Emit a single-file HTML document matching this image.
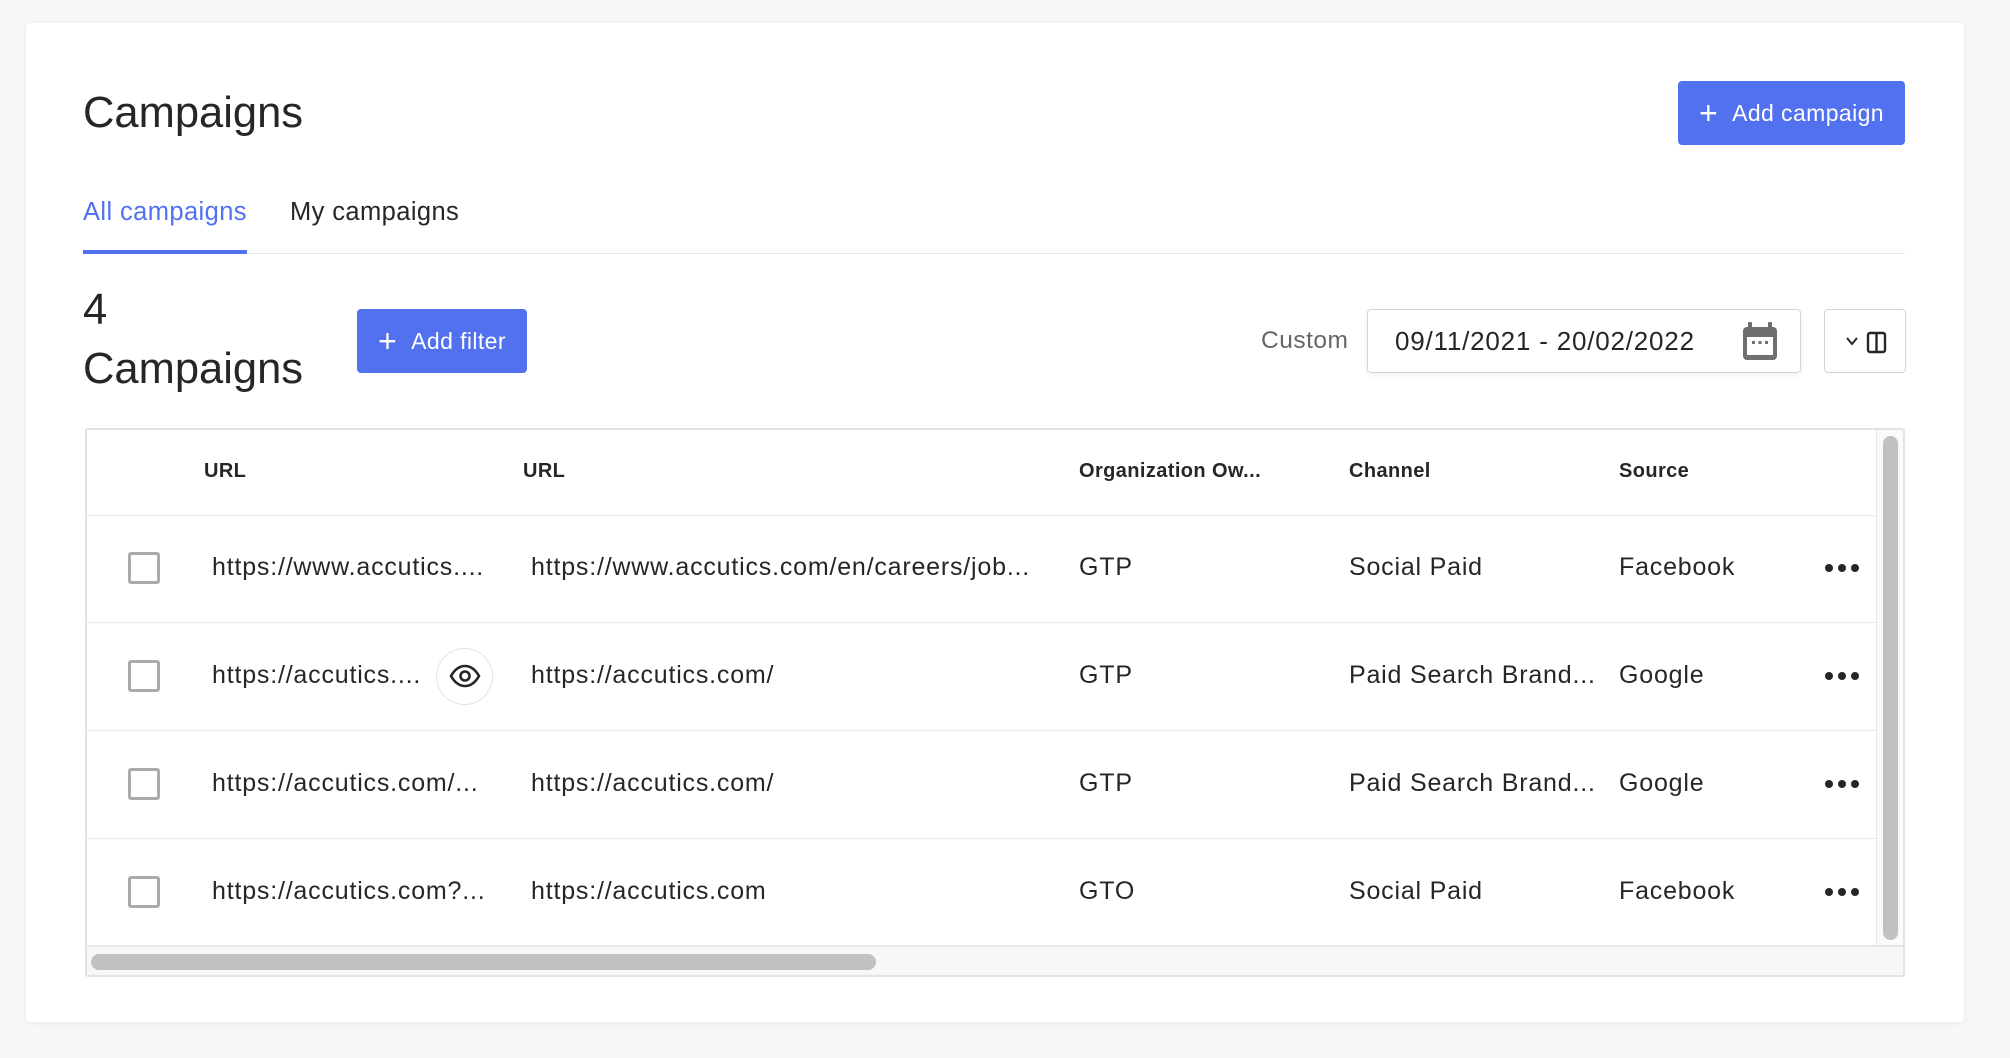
<!DOCTYPE html>
<html><head><meta charset="utf-8"><style>
*{box-sizing:border-box;margin:0;padding:0}
body{width:2010px;height:1058px;background:#f7f7f7;font-family:"Liberation Sans",sans-serif;color:#262626;position:relative;overflow:hidden}
.a{position:absolute;white-space:nowrap}
.card{position:absolute;left:26px;top:23px;width:1938px;height:999px;background:#fff;border-radius:4px;box-shadow:0 1px 6px rgba(0,0,0,.06)}
.btn{position:absolute;background:#5271ef;color:#fff;border-radius:4px;font-size:23px;letter-spacing:.4px;display:flex;align-items:center;justify-content:center;gap:14px}
.t{font-size:25px;line-height:30px;letter-spacing:.8px}
.h{font-size:20px;font-weight:bold;line-height:24px;letter-spacing:.4px}
.cb{position:absolute;left:128px;width:32px;height:32px;border:3px solid #aaa;border-radius:3px}
.sep{position:absolute;left:86px;width:1790px;height:1px;background:#ebebeb}
.dots{position:absolute;left:1825px;display:flex;gap:5px}
.dots i{width:8px;height:8px;border-radius:50%;background:#262626;display:block}
</style></head><body>
<div class="card"></div>
<div class="a" style="left:83px;top:88px;font-size:43.5px;line-height:50px">Campaigns</div>
<div class="btn" style="left:1678px;top:81px;width:227px;height:64px"><span style="font-size:32px;font-weight:300;line-height:1">+</span><span>Add campaign</span></div>
<div class="a" style="left:83px;top:198px;font-size:25.5px;letter-spacing:.4px;color:#5271ef">All campaigns</div>
<div class="a" style="left:290px;top:198px;font-size:25.5px;letter-spacing:.4px">My campaigns</div>
<div class="a" style="left:83px;top:253px;width:1822px;height:1px;background:#e6e6e6"></div>
<div class="a" style="left:83px;top:250px;width:164px;height:4px;background:#5271ef"></div>
<div class="a" style="left:83px;top:285px;font-size:43.5px;line-height:50px">4</div>
<div class="a" style="left:83px;top:344px;font-size:43.5px;line-height:50px">Campaigns</div>
<div class="btn" style="left:357px;top:309px;width:170px;height:64px"><span style="font-size:32px;font-weight:300;line-height:1">+</span><span>Add filter</span></div>
<div class="a" style="left:1261px;top:327px;font-size:24.5px;letter-spacing:.5px;color:#666">Custom</div>
<div class="a" style="left:1367px;top:309px;width:434px;height:64px;border:1px solid #d4d4d4;border-radius:4px;box-shadow:0 2px 6px rgba(0,0,0,.06)"></div>
<div class="a" style="left:1395px;top:326px;font-size:26px;letter-spacing:.8px">09/11/2021 - 20/02/2022</div>
<svg class="a" style="left:1742px;top:321px" width="36" height="40" viewBox="0 0 36 40"><rect x="1" y="6" width="34" height="33" rx="4" fill="#6f6f6f"/><rect x="6" y="1" width="4" height="9" rx="1" fill="#6f6f6f"/><rect x="26" y="1" width="4" height="9" rx="1" fill="#6f6f6f"/><rect x="5" y="16" width="26" height="18" fill="#fff"/><rect x="10" y="20" width="3" height="3" fill="#6f6f6f"/><rect x="16.5" y="20" width="3" height="3" fill="#6f6f6f"/><rect x="23" y="20" width="3" height="3" fill="#6f6f6f"/></svg>
<div class="a" style="left:1824px;top:309px;width:82px;height:64px;border:1px solid #d4d4d4;border-radius:4px"></div>
<svg class="a" style="left:1845px;top:330px" width="44" height="24" viewBox="0 0 44 24"><path d="M2 8l5 6 5-6" fill="none" stroke="#262626" stroke-width="2"/><rect x="23" y="3" width="17" height="19" rx="2" fill="none" stroke="#262626" stroke-width="2.4"/><path d="M31.5 3v19" stroke="#262626" stroke-width="2.4"/></svg>
<!-- table -->
<div class="a" style="left:85px;top:428px;width:1820px;height:549px;border:2px solid #e3e3e3;border-radius:3px"></div>
<div class="a" style="left:1876px;top:430px;width:27px;height:515px;background:#fafafa;border-left:1px solid #e6e6e6"></div>
<div class="a" style="left:1883px;top:436px;width:15px;height:504px;background:#c1c1c1;border-radius:8px"></div>
<div class="a" style="left:87px;top:945px;width:1816px;height:30px;background:#f7f7f7;border-top:2px solid #e6e6e6"></div>
<div class="a" style="left:91px;top:954px;width:785px;height:16px;background:#c1c1c1;border-radius:8px"></div>
<div class="a h" style="left:204px;top:459px">URL</div>
<div class="a h" style="left:523px;top:459px">URL</div>
<div class="a h" style="left:1079px;top:459px">Organization Ow...</div>
<div class="a h" style="left:1349px;top:459px">Channel</div>
<div class="a h" style="left:1619px;top:459px">Source</div>
<div class="sep" style="top:515px"></div>
<div class="sep" style="top:622px"></div>
<div class="sep" style="top:730px"></div>
<div class="sep" style="top:838px"></div>
<div class="sep" style="top:945px"></div>
<!-- row1 -->
<div class="cb" style="top:552px"></div>
<div class="a t" style="left:212px;top:552px">https://www.accutics....</div>
<div class="a t" style="left:531px;top:552px">https://www.accutics.com/en/careers/job...</div>
<div class="a t" style="left:1079px;top:552px">GTP</div>
<div class="a t" style="left:1349px;top:552px">Social Paid</div>
<div class="a t" style="left:1619px;top:552px">Facebook</div>
<div class="dots" style="top:564px"><i></i><i></i><i></i></div>
<!-- row2 -->
<div class="cb" style="top:660px"></div>
<div class="a t" style="left:212px;top:660px">https://accutics....</div>
<div class="a" style="left:436px;top:648px;width:57px;height:57px;border:1px solid #e3e3e3;border-radius:50%"></div>
<svg class="a" style="left:449px;top:664px" width="32" height="24" viewBox="0 0 32 24"><path d="M2 12C6 5 11 2 16 2s10 3 14 10c-4 7-9 10-14 10S6 19 2 12z" fill="none" stroke="#262626" stroke-width="2.6"/><circle cx="16" cy="12" r="4.5" fill="none" stroke="#262626" stroke-width="2.6"/></svg>
<div class="a t" style="left:531px;top:660px">https://accutics.com/</div>
<div class="a t" style="left:1079px;top:660px">GTP</div>
<div class="a t" style="left:1349px;top:660px">Paid Search Brand...</div>
<div class="a t" style="left:1619px;top:660px">Google</div>
<div class="dots" style="top:672px"><i></i><i></i><i></i></div>
<!-- row3 -->
<div class="cb" style="top:768px"></div>
<div class="a t" style="left:212px;top:768px">https://accutics.com/...</div>
<div class="a t" style="left:531px;top:768px">https://accutics.com/</div>
<div class="a t" style="left:1079px;top:768px">GTP</div>
<div class="a t" style="left:1349px;top:768px">Paid Search Brand...</div>
<div class="a t" style="left:1619px;top:768px">Google</div>
<div class="dots" style="top:780px"><i></i><i></i><i></i></div>
<!-- row4 -->
<div class="cb" style="top:876px"></div>
<div class="a t" style="left:212px;top:876px">https://accutics.com?...</div>
<div class="a t" style="left:531px;top:876px">https://accutics.com</div>
<div class="a t" style="left:1079px;top:876px">GTO</div>
<div class="a t" style="left:1349px;top:876px">Social Paid</div>
<div class="a t" style="left:1619px;top:876px">Facebook</div>
<div class="dots" style="top:888px"><i></i><i></i><i></i></div>
</body></html>
